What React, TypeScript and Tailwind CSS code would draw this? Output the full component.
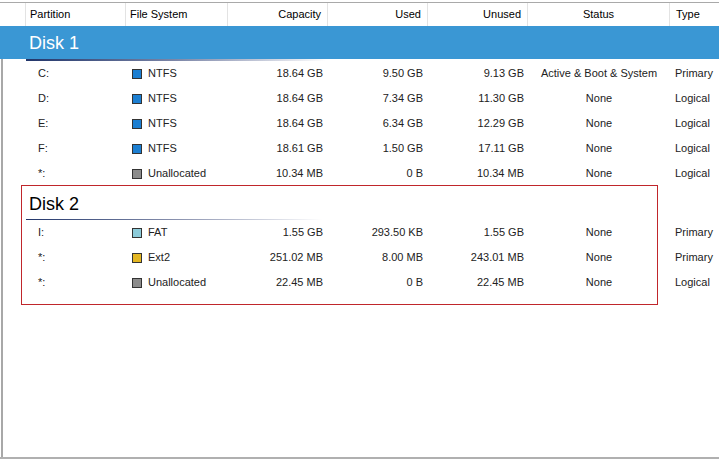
import React from 'react'

type Row = {
  part: string
  fs: string
  color: string
  cap: string
  used: string
  unused: string
  status: string
  type: string
}

const disk1: Row[] = [
  { part: 'C:', fs: 'NTFS', color: 'bg-[#1c7fd2]', cap: '18.64 GB', used: '9.50 GB', unused: '9.13 GB', status: 'Active & Boot & System', type: 'Primary' },
  { part: 'D:', fs: 'NTFS', color: 'bg-[#1c7fd2]', cap: '18.64 GB', used: '7.34 GB', unused: '11.30 GB', status: 'None', type: 'Logical' },
  { part: 'E:', fs: 'NTFS', color: 'bg-[#1c7fd2]', cap: '18.64 GB', used: '6.34 GB', unused: '12.29 GB', status: 'None', type: 'Logical' },
  { part: 'F:', fs: 'NTFS', color: 'bg-[#1c7fd2]', cap: '18.61 GB', used: '1.50 GB', unused: '17.11 GB', status: 'None', type: 'Logical' },
  { part: '*:', fs: 'Unallocated', color: 'bg-[#8c8c8c]', cap: '10.34 MB', used: '0 B', unused: '10.34 MB', status: 'None', type: 'Logical' },
]

const disk2: Row[] = [
  { part: 'I:', fs: 'FAT', color: 'bg-[#8ccbd9]', cap: '1.55 GB', used: '293.50 KB', unused: '1.55 GB', status: 'None', type: 'Primary' },
  { part: '*:', fs: 'Ext2', color: 'bg-[#e3b622]', cap: '251.02 MB', used: '8.00 MB', unused: '243.01 MB', status: 'None', type: 'Primary' },
  { part: '*:', fs: 'Unallocated', color: 'bg-[#8c8c8c]', cap: '22.45 MB', used: '0 B', unused: '22.45 MB', status: 'None', type: 'Logical' },
]

// rows sit inside the bordered body, which starts 3px in
const DataRow = ({ r }: { r: Row }) => (
  <div className="flex h-[25px] items-center text-[11px] text-[#222]">
    <div className="w-[23px] shrink-0" />
    <div className="w-[100px] shrink-0 pl-3">{r.part}</div>
    <div className="flex w-[102px] shrink-0 items-center gap-1.5 pl-1.5">
      <span className={`h-[10px] w-[10px] border border-[#333] ${r.color}`} />
      <span>{r.fs}</span>
    </div>
    <div className="w-[100px] shrink-0 pr-[5px] text-right">{r.cap}</div>
    <div className="w-[100px] shrink-0 pr-[5px] text-right">{r.used}</div>
    <div className="w-[100px] shrink-0 pr-[4px] text-right">{r.unused}</div>
    <div className="w-[142px] shrink-0 text-center">{r.status}</div>
    <div className="flex-1 pl-[5px]">{r.type}</div>
  </div>
)

const App = () => {
  return (
    <div
      className="relative h-[459px] w-[719px] overflow-hidden bg-white"
      style={{ fontFamily: '"Liberation Sans", Arial, sans-serif' }}
    >
      <div className="h-[2px]" />
      <div className="flex h-[24px] items-center border-t border-[#a9a9a9] text-[11px] text-black">
        <div className="h-full w-[26px] shrink-0 border-r border-[#e3e3e3]" />
        <div className="flex h-full w-[100px] shrink-0 items-center border-r border-[#e3e3e3] pl-1">Partition</div>
        <div className="flex h-full w-[102px] shrink-0 items-center border-r border-[#e3e3e3] pl-1">File System</div>
        <div className="flex h-full w-[100px] shrink-0 items-center justify-end border-r border-[#e3e3e3] pr-1.5">Capacity</div>
        <div className="flex h-full w-[100px] shrink-0 items-center justify-end border-r border-[#e3e3e3] pr-1.5">Used</div>
        <div className="flex h-full w-[100px] shrink-0 items-center justify-end border-r border-[#e3e3e3] pr-1.5">Unused</div>
        <div className="flex h-full w-[142px] shrink-0 items-center justify-center border-r border-[#e3e3e3]">Status</div>
        <div className="flex h-full flex-1 items-center pl-1.5">Type</div>
      </div>

      <div className="flex h-[33px] items-center bg-[#3a97d4] pl-[29px] pt-[1px] text-[18px] text-white">Disk 1</div>

      <div className="ml-[1px] h-[398px] border-l-2 border-[#a8a8a8]">
        <div className="ml-[23px] h-[2px] w-[300px] bg-gradient-to-r from-[#22356a] via-[#7d87a8] to-white" />
        {disk1.map((r, i) => (
          <DataRow key={i} r={r} />
        ))}
        <div className="flex h-[33px] items-end pb-[1px] pl-[26px] text-[18px] text-black">Disk 2</div>
        <div className="ml-[23px] h-[1px] w-[296px] bg-gradient-to-r from-[#22356a] via-[#8890ad] to-white" />
        {disk2.map((r, i) => (
          <DataRow key={i} r={r} />
        ))}
      </div>
      <div className="h-[2px] bg-[#b0b0b0]" />

      <div className="absolute left-[21px] top-[185px] h-[120px] w-[637px] border border-[#c0262b]" />
    </div>
  )
}

export default App
